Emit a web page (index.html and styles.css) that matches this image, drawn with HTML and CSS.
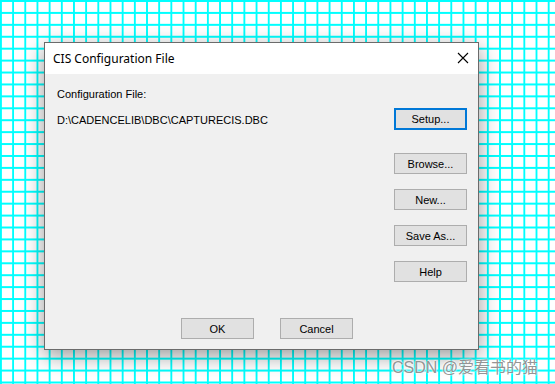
FILE: index.html
```html
<!DOCTYPE html>
<html>
<head>
  <link rel="stylesheet" href="styles.css">
</head>
<body>
  <div class="dialog">
    <div class="titlebar">
      <span class="title">CIS Configuration File</span>
      <svg class="close" width="12" height="12" viewBox="0 0 12 12">
        <path d="M1 1 L11 11 M11 1 L1 11" stroke="#000" stroke-width="1.1" fill="none"/>
      </svg>
    </div>
    <div class="content">
      <div class="main">
        <div class="info">
          <div class="label">Configuration File:</div>
          <div class="path">D:\CADENCELIB\DBC\CAPTURECIS.DBC</div>
        </div>
        <div class="side">
          <button class="btn default">Setup...</button>
          <button class="btn first">Browse...</button>
          <button class="btn">New...</button>
          <button class="btn">Save As...</button>
          <button class="btn">Help</button>
        </div>
      </div>
      <div class="footer">
        <button class="btn">OK</button>
        <button class="btn">Cancel</button>
      </div>
    </div>
  </div>

  <div class="watermark">CSDN @爱看书的猫</div>
</body>
</html>
```

FILE: styles.css
```css
html, body {
  margin: 0;
  height: 100%;
}
body {
  background-color: #fff;
  background-image:
    linear-gradient(to right, #00ffff 0, #00ffff 1.6px, transparent 1.6px),
    linear-gradient(to bottom, #00ffff 0, #00ffff 1.6px, transparent 1.6px);
  background-size: 12.18px 11.93px;
  padding: 42px 0 0 44px;
  box-sizing: border-box;
  position: relative;
  overflow: hidden;
}

.dialog {
  width: 435px;
  height: 308px;
  box-sizing: border-box;
  border: 1px solid #6b6b6b;
  background: #f0f0f0;
  box-shadow: 0 6px 20px rgba(0, 0, 0, 0.4);
  display: flex;
  flex-direction: column;
}

.titlebar {
  height: 31px;
  background: #fff;
  display: flex;
  align-items: center;
  padding: 0 8px 0 8px;
}
.title {
  font-family: "Noto Sans", sans-serif;
  font-size: 12px;
  color: #000;
  flex: 1;
}
.close {
  margin-right: 1px;
  margin-top: -1px;
}

.content {
  flex: 1;
  display: flex;
  flex-direction: column;
  font-family: "Liberation Sans", Arial, sans-serif;
  font-size: 11px;
  color: #000;
}

.main {
  display: flex;
}
.info {
  flex: 1;
  padding: 14px 0 0 12px;
}
.label, .path {
  line-height: 13px;
}
.path {
  margin-top: 13px;
}

.side {
  display: flex;
  flex-direction: column;
  gap: 15px;
  padding: 34px 11px 0 0;
}
.side .first {
  margin-top: 8px;
}

.btn {
  width: 73px;
  height: 21px;
  box-sizing: border-box;
  border: 1px solid #adadad;
  background: #e1e1e1;
  font-family: "Liberation Sans", Arial, sans-serif;
  font-size: 11px;
  color: #000;
  padding: 0;
  border-radius: 0;
}
.btn.default {
  border: 2px solid #0078d7;
  height: 22px;
}

.footer {
  margin-top: auto;
  display: flex;
  gap: 26px;
  padding: 0 0 10px 136px;
}

.watermark {
  position: absolute;
  right: 17px;
  bottom: 6px;
  font-family: "Liberation Sans", "Noto Sans CJK SC", sans-serif;
  font-size: 16px;
  color: rgba(120, 120, 120, 0.8);
  text-shadow: 0 0 2px #fff, 0 0 2px #fff;
}
```
